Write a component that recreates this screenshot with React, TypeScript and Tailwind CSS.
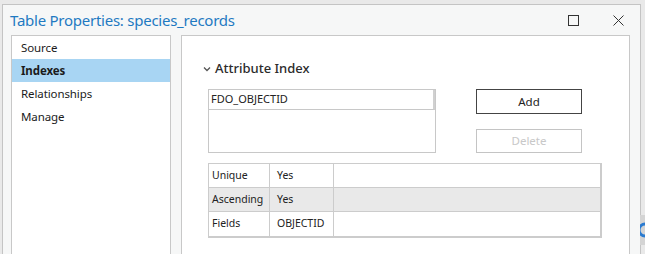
import React from "react";

const font = { fontFamily: '"Noto Sans", "Open Sans", sans-serif' };

function NavItem({ label, active }: { label: string; active?: boolean }) {
  return (
    <div
      className={
        "h-[23px] flex items-center pl-[9px] text-[11.5px] tracking-[-0.1px] " +
        (active ? "bg-[#a8d5f3] font-bold text-[#1b1b1b]" : "text-[#1b1b1b]")
      }
    >
      {label}
    </div>
  );
}

function Row({ label, value, shaded }: { label: string; value: string; shaded?: boolean }) {
  return (
    <div
      className={
        "flex h-[24px] border-b border-[#cccccc] last:border-b-0 text-[10.5px] text-[#222] " +
        (shaded ? "bg-[#e9e9e9]" : "bg-white")
      }
    >
      <div className="w-[61px] border-r border-[#cccccc] flex items-center pl-[3px]">{label}</div>
      <div className="w-[64px] border-r border-[#cccccc] flex items-center pl-[7px]">{value}</div>
      <div className="flex-1" />
    </div>
  );
}

export default function App() {
  return (
    <div
      className="w-[645px] h-[254px] overflow-hidden bg-[#e9e9e9] pl-[2px] pt-[4px] relative"
      style={font}
    >
      <div className="w-[639px] h-[260px] bg-[#f6f7f7] border border-[#c4c4c4] flex flex-col">
        <div className="h-[30px] flex items-center pl-[7px] pr-[16px]">
          <span className="text-[15px] tracking-[-0.25px] text-[#1f7ac2] leading-none flex-1 pt-[1px]">
            Table Properties: species_records
          </span>
          <svg width="11" height="11" viewBox="0 0 11 11" className="mr-[34px]">
            <rect x="0.5" y="0.5" width="10" height="10" fill="none" stroke="#333" strokeWidth="1" />
          </svg>
          <svg width="11" height="11" viewBox="0 0 11 11">
            <path d="M0.5 0.5 L10.5 10.5 M10.5 0.5 L0.5 10.5" stroke="#333" strokeWidth="1" />
          </svg>
        </div>
        <div className="flex flex-1 pl-[8px] gap-[10px]">
          <div className="w-[160px] bg-white border border-[#c8c8c8] border-b-0">
            <NavItem label="Source" />
            <NavItem label="Indexes" active />
            <NavItem label="Relationships" />
            <NavItem label="Manage" />
          </div>
          <div className="w-[449px] bg-white border border-[#c8c8c8] border-b-0 pl-[26px] pt-[24px]">
            <div className="flex items-center h-[18px] -ml-[5px] text-[13px] text-[#2b2b2b] font-medium">
              <svg width="8" height="6" viewBox="0 0 8 6" className="mr-[4px]">
                <path d="M1 1.5 L4 4.5 L7 1.5" fill="none" stroke="#555" strokeWidth="1.3" />
              </svg>
              Attribute Index
            </div>
            <div className="flex mt-[11px]">
              <div className="w-[228px] h-[64px] border border-[#c8c8c8] bg-white">
                <div className="h-[20px] border-b border-[#c8c8c8] border-r-2 border-r-[#d0d0d0] flex items-center pl-[2px] text-[11px] text-[#222]">
                  FDO_OBJECTID
                </div>
              </div>
              <div className="ml-[40px] flex flex-col gap-[15px]">
                <button className="w-[106px] h-[25px] border border-[#444] bg-white text-[11.5px] text-[#222]">
                  Add
                </button>
                <button className="w-[106px] h-[24px] border border-[#c4c4c4] bg-white text-[11.5px] text-[#c8c8c8]">
                  Delete
                </button>
              </div>
            </div>
            <div className="w-[394px] mt-[10px] border-2 border-t border-l border-[#cccccc]">
              <Row label="Unique" value="Yes" />
              <Row label="Ascending" value="Yes" shaded />
              <Row label="Fields" value="OBJECTID" />
            </div>
          </div>
        </div>
      </div>
      <div className="absolute right-0 top-[215px] w-[5px] h-[30px] bg-[#d4d4d4]" />
      <svg className="absolute right-0 top-[222px]" width="5" height="16" viewBox="0 0 5 16">
        <path d="M5 2 A6 6 0 0 0 5 14" fill="none" stroke="#2b7bd0" strokeWidth="3" />
      </svg>
    </div>
  );
}
